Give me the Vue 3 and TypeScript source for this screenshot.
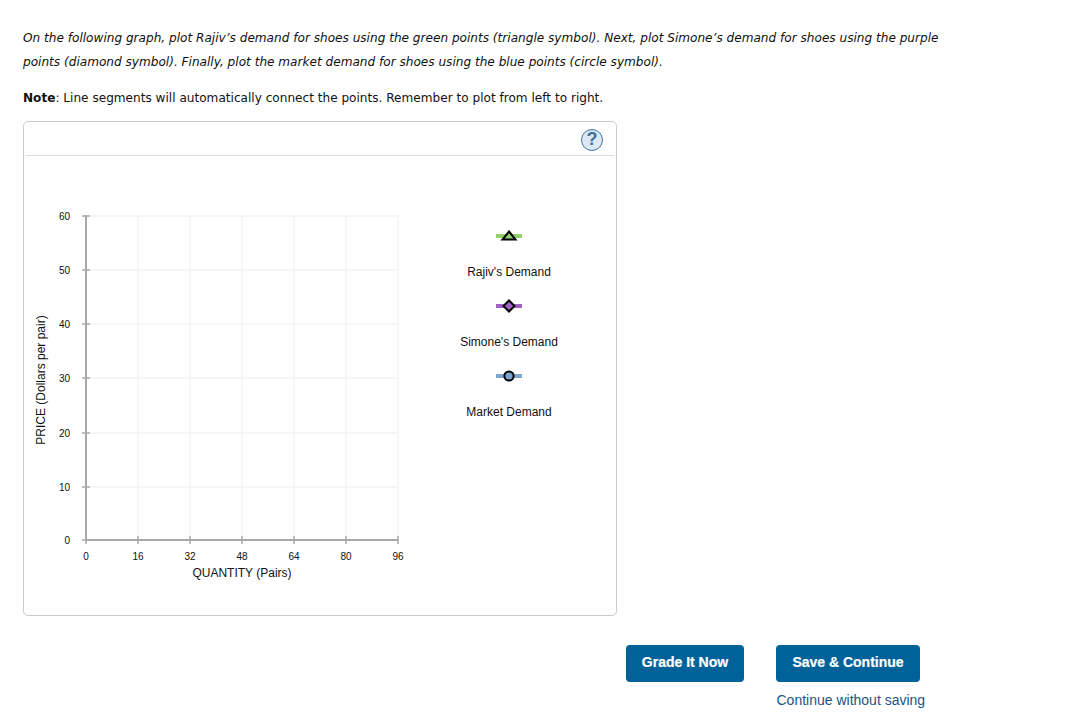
<script setup lang="ts">
const gridX = [138, 190, 242, 294, 346, 398]
const gridY = [216, 270, 324, 378, 433, 487]
const xTicks = [
  { x: 86, label: '0' },
  { x: 138, label: '16' },
  { x: 190, label: '32' },
  { x: 242, label: '48' },
  { x: 294, label: '64' },
  { x: 346, label: '80' },
  { x: 398, label: '96' },
]
const yTicks = [
  { y: 216, label: '60' },
  { y: 270, label: '50' },
  { y: 324, label: '40' },
  { y: 378, label: '30' },
  { y: 433, label: '20' },
  { y: 487, label: '10' },
  { y: 540, label: '0' },
]
</script>

<template>
  <main class="page">
    <p class="prompt">
      <em>On the following graph, plot Rajiv’s demand for shoes using the green points (triangle symbol). Next, plot Simone’s demand for shoes using the purple points (diamond symbol). Finally, plot the market demand for shoes using the blue points (circle symbol).</em>
    </p>
    <p class="note"><strong>Note</strong>: Line segments will automatically connect the points. Remember to plot from left to right.</p>

    <section class="card">
      <header class="card-head">
        <span class="help">?</span>
      </header>
      <svg class="chart" width="592" height="459" viewBox="24 156 592 459">
        <g class="grid">
          <line v-for="x in gridX" :key="x" :x1="x" :x2="x" y1="216" y2="540" />
          <line v-for="y in gridY" :key="y" x1="86" x2="398" :y1="y" :y2="y" />
        </g>
        <g class="axis">
          <line x1="86" x2="86" y1="215" y2="541" />
          <line x1="85" x2="398.5" y1="540" y2="540" />
          <line v-for="t in yTicks" :key="t.y" class="tick-mark" x1="82" x2="90" :y1="t.y" :y2="t.y" />
          <line v-for="t in xTicks" :key="t.x" class="tick-mark" :x1="t.x" :x2="t.x" y1="536" y2="544" />
        </g>
        <text v-for="t in yTicks" :key="t.label" class="tick" x="70" :y="t.y + 4" text-anchor="end">{{ t.label }}</text>
        <text v-for="t in xTicks" :key="t.label" class="tick" :x="t.x" y="560" text-anchor="middle">{{ t.label }}</text>
        <text class="label" x="242" y="577" text-anchor="middle">QUANTITY (Pairs)</text>
        <text class="label" transform="translate(45 380) rotate(-90)" text-anchor="middle">PRICE (Dollars per pair)</text>

        <rect x="496" y="234" width="26" height="4" fill="#8fd16b" />
        <polygon points="509,231.5 515.5,239.5 502.5,239.5" fill="#8fd16b" stroke="#000" stroke-width="2" />
        <text class="legend" x="509" y="276" text-anchor="middle">Rajiv's Demand</text>

        <rect x="496" y="304" width="26" height="4" fill="#a45fc9" />
        <polygon points="509,300.5 514.5,306 509,311.5 503.5,306" fill="#a45fc9" stroke="#000" stroke-width="2" />
        <text class="legend" x="509" y="346" text-anchor="middle">Simone's Demand</text>

        <rect x="496" y="374" width="26" height="4" fill="#7ba6d2" />
        <circle cx="509" cy="376" r="4.6" fill="#7ba6d2" stroke="#000" stroke-width="2" />
        <text class="legend" x="509" y="416" text-anchor="middle">Market Demand</text>
      </svg>
    </section>

    <div class="actions">
      <button class="btn grade" type="button">Grade It Now</button>
      <div class="save-group">
        <button class="btn save" type="button">Save &amp; Continue</button>
        <a class="skip" href="#">Continue without saving</a>
      </div>
    </div>
  </main>
</template>

<style scoped>
.page {
  width: 1085px;
  height: 719px;
  box-sizing: border-box;
  padding: 26px 0 0 23px;
  overflow: hidden;
  font-family: "DejaVu Sans", sans-serif;
  color: #111;
  background: #fff;
}
.prompt {
  width: 930px;
  margin: 0;
  font-size: 12.1px;
  line-height: 24px;
}
.note {
  margin: 12px 0 0;
  font-size: 12.1px;
  line-height: 24px;
}
.card {
  width: 592px;
  height: 493px;
  margin-top: 11px;
  border: 1px solid #ccc;
  border-radius: 5px;
}
.card-head {
  box-sizing: border-box;
  height: 34px;
  margin: 0 2px;
  padding: 2px 11px 0 0;
  border-bottom: 1px solid #ddd;
  display: flex;
  justify-content: flex-end;
  align-items: center;
}
.help {
  box-sizing: border-box;
  width: 22px;
  height: 22px;
  border: 1.5px solid #3f73a3;
  border-radius: 50%;
  background: #dce8f3;
  color: #3f6f9c;
  font: 700 18px/19px "Liberation Sans", sans-serif;
  text-align: center;
}
.chart {
  display: block;
}
.grid line {
  stroke: #f3f3f3;
  stroke-width: 1.5;
}
.axis line {
  stroke: #a8a8a8;
  stroke-width: 2;
}
.axis .tick-mark {
  stroke-width: 1.5;
}
.tick {
  font: 10px "Liberation Sans", sans-serif;
  fill: #111;
}
.label,
.legend {
  font: 12px "Liberation Sans", sans-serif;
  fill: #111;
}
.actions {
  display: flex;
  gap: 32px;
  margin: 29px 0 0 603px;
}
.btn {
  height: 37px;
  border: 0;
  border-radius: 4px;
  background: #006299;
  color: #fff;
  font: 700 14px "Liberation Sans", sans-serif;
  -webkit-text-stroke: 0.2px #fff;
  padding: 0 0 4px;
}
.grade {
  width: 118px;
}
.save {
  width: 144px;
}
.save-group {
  display: flex;
  flex-direction: column;
  align-items: flex-start;
}
.skip {
  margin: 10px 0 0 0.5px;
  font: 14px "Liberation Sans", sans-serif;
  color: #1c5486;
  text-decoration: none;
  white-space: nowrap;
}
</style>
